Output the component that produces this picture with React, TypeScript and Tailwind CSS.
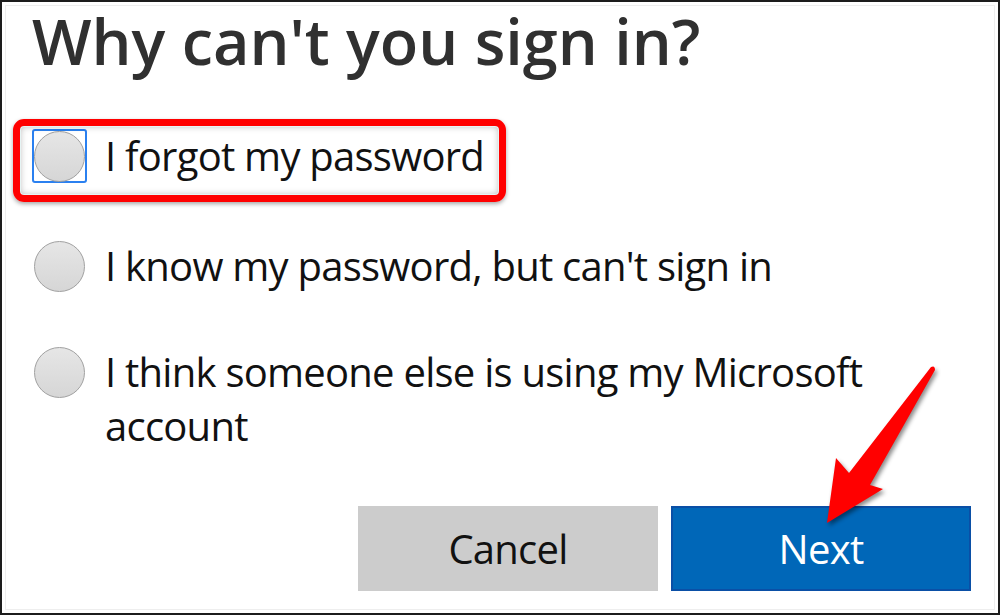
const options = [
  { label: "I forgot my password", focused: true, spacing: "" },
  { label: "I know my password, but can't sign in", focused: false, spacing: "mt-[56px]" },
  {
    label: "I think someone else is using my Microsoft account",
    focused: false,
    spacing: "mt-[52px]",
  },
];

export default function App() {
  return (
    <div
      className="relative w-[1000px] h-[615px] flex flex-col overflow-hidden bg-white border-2 border-[#1c1c1c] shadow-[inset_0_0_0_3px_#ffffff,inset_0_0_0_4px_#eeeeee] pl-[30px] pr-[27px] pt-[4px] pb-[22px]"
      style={{ fontFamily: '"Open Sans", "Noto Sans", sans-serif' }}
    >
      <h1 className="text-[63px] leading-[70px] font-semibold text-[#303030]">
        Why can't you sign in?
      </h1>

      <div className="mt-[53px] flex flex-col">
        {options.map(({ label, focused, spacing }) => (
          <RadioRow key={label} label={label} focused={focused} className={spacing} />
        ))}
      </div>

      <div className="mt-auto flex justify-end gap-[13px]">
        <button className="w-[300px] h-[85px] bg-[#cccccc] text-[#111] text-[40px] tracking-[-0.75px] leading-none">
          Cancel
        </button>
        <button className="w-[300px] h-[85px] bg-[#0067b8] border-2 border-[#0a4fa6] text-white text-[40px] tracking-[-0.75px] leading-none">
          Next
        </button>
      </div>

      {/* annotation: red highlight around the first option */}
      <div className="absolute left-[11px] top-[117px] w-[493px] h-[83px] rounded-[11px] border-[7px] border-[#ff0000] shadow-[0_2px_4px_rgba(0,0,0,0.35),inset_0_0_0_1px_#e6f4f4,inset_0_0_7px_rgba(0,0,0,0.3)] pointer-events-none" />

      {/* annotation: arrow pointing at Next */}
      <svg
        className="absolute left-[-2px] top-[-2px] w-[1000px] h-[615px] pointer-events-none drop-shadow-[2px_3px_2px_rgba(0,0,0,0.45)]"
        viewBox="0 0 1000 615"
      >
        <path
          d="M931 367 Q935 365 935 370 L870 485 L883 489 L827 523 L836 458 L849 473 Z"
          fill="#ff0000"
        />
      </svg>
    </div>
  );
}

type RadioRowProps = {
  label: string;
  focused: boolean;
  className?: string;
};

function RadioRow({ label, focused, className = "" }: RadioRowProps) {
  return (
    <label className={`flex items-start gap-[18px] ${className}`}>
      <span
        className={`flex items-center justify-center w-[55px] h-[54px] shrink-0 rounded-[3px] border-2 ${
          focused ? "border-[#2a80f0]" : "border-transparent"
        }`}
      >
        <span className="block w-[51px] h-[51px] rounded-full border-[1.5px] border-[#a0a0a0] bg-gradient-to-b from-[#e6e6e6] to-[#d6d6d6]" />
      </span>
      <span className="text-[40px] leading-[54px] tracking-[-0.75px] text-[#111]">{label}</span>
    </label>
  );
}
